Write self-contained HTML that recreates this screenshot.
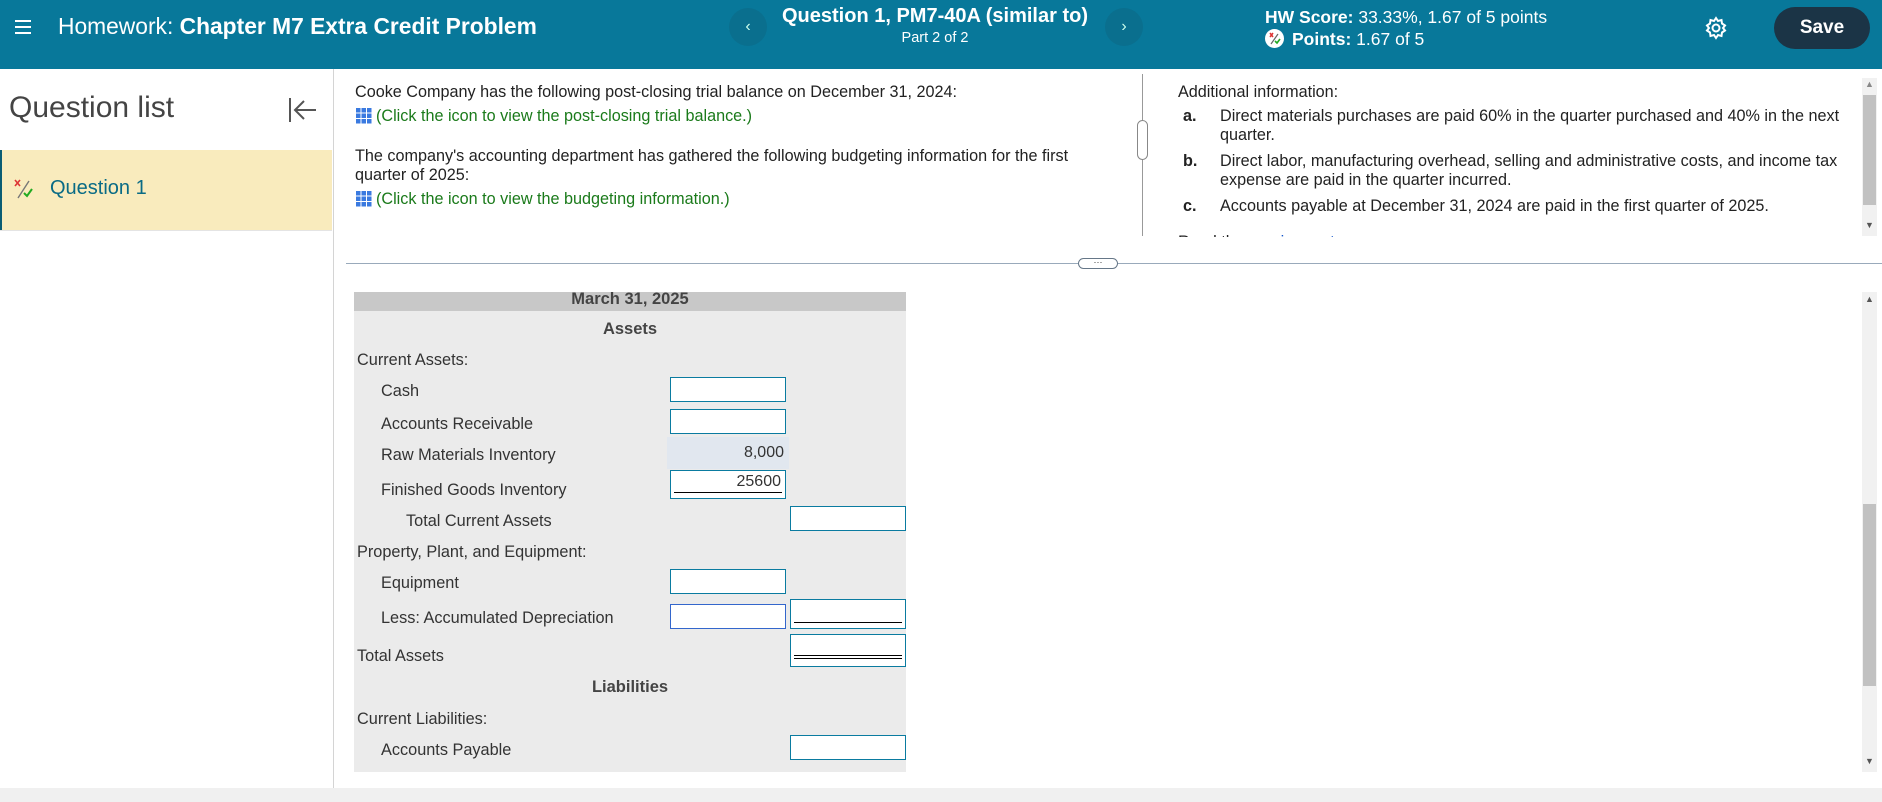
<!DOCTYPE html>
<html><head><meta charset="utf-8"><style>
*{box-sizing:border-box;margin:0;padding:0}
body{width:1882px;height:802px;overflow:hidden;background:#fff;font-family:"Liberation Sans",Arial,sans-serif;color:#333;position:relative}
.a{position:absolute;white-space:nowrap}
.hdr{position:absolute;left:0;top:0;width:1882px;height:69px;background:#08789a;color:#fff}
.circ{position:absolute;width:38px;height:38px;border-radius:50%;background:#0a6f8e;color:#cfe;font-size:16px;text-align:center;line-height:38px}
.inp{position:absolute;width:116px;height:25px;background:#fff;border:1.5px solid #0a7ba0}
.lbl{position:absolute;font-size:16.3px;color:#333;white-space:nowrap}
.p{font-size:16.2px;color:#222}
.g{color:#1a7a1a}
.ic{display:inline-block;width:17px;height:17px;background:#3a7ae0;border-radius:2px;vertical-align:-3px;margin-right:4px;background-image:linear-gradient(#fff 1px,transparent 1px),linear-gradient(90deg,#fff 1px,transparent 1px);background-size:5.5px 5.5px;background-position:0 0}
</style></head><body>
<div class="hdr">
 <svg class="a" style="left:14px;top:18px" width="18" height="18" viewBox="0 0 18 18" stroke="#fff" stroke-width="2"><path d="M1 3h16M1 9h16M1 15h16"/></svg>
 <div class="a" style="left:58px;top:13px;font-size:22.8px">Homework: <b>Chapter M7 Extra Credit Problem</b></div>
 <div class="circ" style="left:729px;top:8px">&#8249;</div>
 <div class="a" style="left:935px;top:5px;transform:translateX(-50%);font-size:20px;font-weight:bold;text-align:center">Question 1, PM7-40A (similar to)</div>
 <div class="a" style="left:935px;top:30px;transform:translateX(-50%);font-size:14.5px">Part 2 of 2</div>
 <div class="circ" style="left:1105px;top:8px">&#8250;</div>
 <div class="a" style="left:1265px;top:7px;font-size:17.5px"><b>HW Score:</b> 33.33%, 1.67 of 5 points</div>
 <div class="a" style="left:1265px;top:29px;font-size:17.5px"><svg width="19" height="19" viewBox="0 0 19 19" style="vertical-align:-3px;margin-right:8px"><circle cx="9.5" cy="9.5" r="9.5" fill="#fff"/><path d="M5 4l3 4M8 4l-3 4" stroke="#d33" stroke-width="1.5"/><path d="M13 5L6 15" stroke="#666" stroke-width="1.2"/><path d="M10 12l2 2 3-4" stroke="#2a2" stroke-width="1.6" fill="none"/></svg><b>Points:</b> 1.67 of 5</div>
 <svg class="a" style="left:1704px;top:16px" width="24" height="24" viewBox="0 0 24 24" fill="none" stroke="#fff" stroke-width="2"><circle cx="12" cy="12" r="3.5"/><path d="M12 2l2 3 3.5-1 .5 3.5 3 2-2 2.5 2 2.5-3 2-.5 3.5-3.5-1-2 3-2-3-3.5 1-.5-3.5-3-2 2-2.5-2-2.5 3-2 .5-3.5 3.5 1z"/></svg>
 <div class="a" style="left:1774px;top:7px;width:96px;height:42px;border-radius:21px;background:#1b3446;font-size:19px;font-weight:bold;text-align:center;line-height:42px">Save</div>
</div>
<!-- sidebar -->
<div class="a" style="left:333px;top:69px;width:1px;height:719px;background:#d4d4d4"></div>
<div class="a" style="left:9px;top:91px;font-size:30px;color:#444">Question list</div>
<svg class="a" style="left:288px;top:97px" width="30" height="26" viewBox="0 0 30 26" stroke="#555" stroke-width="2" fill="none"><path d="M2 1v24M28 13H8M16 4l-9 9 9 9"/></svg>
<div class="a" style="left:0;top:150px;width:332px;height:80px;background:#f9ebbd;border-left:2px solid #0b5d73"></div>
<svg class="a" style="left:13px;top:178px" width="22" height="22" viewBox="0 0 22 22"><path d="M2 2l5 6M7 2l-5 6" stroke="#d33" stroke-width="1.6"/><path d="M16 3L5 20" stroke="#777" stroke-width="1.4"/><path d="M11 15l3 3 5-7" stroke="#2a2" stroke-width="2" fill="none"/></svg>
<div class="a" style="left:50px;top:177px;font-size:20px;color:#0a6b85">Question 1</div>
<div class="a" style="left:0;top:230px;width:332px;height:1px;background:#e4e4e4"></div>
<!-- content -->
<div class="a p" style="left:355px;top:83px">Cooke Company has the following post-closing trial balance on December 31, 2024:</div>
<div class="a p g" style="left:355px;top:107px"><span class="ic"></span>(Click the icon to view the post-closing trial balance.)</div>
<div class="a p" style="left:355px;top:147px;line-height:19px">The company's accounting department has gathered the following budgeting information for the first<br>quarter of 2025:</div>
<div class="a p g" style="left:355px;top:190px"><span class="ic"></span>(Click the icon to view the budgeting information.)</div>
<div class="a" style="left:1142px;top:74px;width:1px;height:162px;background:#999"></div>
<div class="a" style="left:1137px;top:120px;width:11px;height:40px;border:1px solid #888;border-radius:6px;background:#fff"></div>
<div class="a p" style="left:1178px;top:83px">Additional information:</div>
<div class="a p" style="left:1183px;top:107px;font-weight:bold">a.</div>
<div class="a p" style="left:1220px;top:107px;line-height:19px">Direct materials purchases are paid 60% in the quarter purchased and 40% in the next<br>quarter.</div>
<div class="a p" style="left:1183px;top:152px;font-weight:bold">b.</div>
<div class="a p" style="left:1220px;top:152px;line-height:19px">Direct labor, manufacturing overhead, selling and administrative costs, and income tax<br>expense are paid in the quarter incurred.</div>
<div class="a p" style="left:1183px;top:197px;font-weight:bold">c.</div>
<div class="a p" style="left:1220px;top:197px">Accounts payable at December 31, 2024 are paid in the first quarter of 2025.</div>
<div class="a" style="left:1178px;top:233px;width:600px;height:4px;overflow:hidden"><div class="p">Read the <span style="color:#15c">requirements</span></div></div>
<div class="a" style="left:1862px;top:78px;width:15px;height:158px;background:#f1f1f1"></div>
<div class="a" style="left:1863px;top:95px;width:13px;height:110px;background:#c1c1c1"></div>
<div class="a" style="left:1865px;top:79px;font-size:9px;color:#888">&#9650;</div>
<div class="a" style="left:1865px;top:220px;font-size:9px;color:#555">&#9660;</div>
<div class="a" style="left:346px;top:263px;width:1536px;height:1px;background:#9ab"></div>
<div class="a" style="left:1078px;top:258px;width:40px;height:11px;border:1px solid #678;border-radius:6px;background:#fff;font-size:9px;line-height:7px;text-align:center">&middot;&middot;&middot;</div>
<!-- table -->
<div class="a" style="left:354px;top:292px;width:552px;height:480px;background:#ebebeb"></div>
<div class="a" style="left:354px;top:292px;width:552px;height:19px;background:#c8c8c8"></div>
<div class="a" style="left:630px;top:290px;transform:translateX(-50%);font-size:16.5px;font-weight:bold;color:#444">March 31, 2025</div>
<div class="a" style="left:630px;top:320px;transform:translateX(-50%);font-size:16.5px;font-weight:bold;color:#444">Assets</div>
<div class="lbl" style="left:357px;top:351px">Current Assets:</div>
<div class="lbl" style="left:381px;top:382px">Cash</div>
<div class="lbl" style="left:381px;top:415px">Accounts Receivable</div>
<div class="lbl" style="left:381px;top:446px">Raw Materials Inventory</div>
<div class="lbl" style="left:381px;top:481px">Finished Goods Inventory</div>
<div class="lbl" style="left:406px;top:512px">Total Current Assets</div>
<div class="lbl" style="left:357px;top:543px">Property, Plant, and Equipment:</div>
<div class="lbl" style="left:381px;top:574px">Equipment</div>
<div class="lbl" style="left:381px;top:609px">Less: Accumulated Depreciation</div>
<div class="lbl" style="left:357px;top:647px">Total Assets</div>
<div class="a" style="left:630px;top:678px;transform:translateX(-50%);font-size:16.5px;font-weight:bold;color:#444">Liabilities</div>
<div class="lbl" style="left:357px;top:710px">Current Liabilities:</div>
<div class="lbl" style="left:381px;top:741px">Accounts Payable</div>
<div class="inp" style="left:670px;top:377px"></div>
<div class="inp" style="left:670px;top:409px"></div>
<div class="a" style="left:667px;top:437px;width:122px;height:32px;background:#e1e7ef;font-size:16px;text-align:right;padding:7px 5px 0 0">8,000</div>
<div class="inp" style="left:670px;top:470px;height:29px;font-size:16px;text-align:right;padding:2px 4px 0 0">25600<div style="position:absolute;left:3px;right:3px;bottom:5px;height:1px;background:#000"></div></div>
<div class="inp" style="left:790px;top:506px"></div>
<div class="inp" style="left:670px;top:569px"></div>
<div class="inp" style="left:670px;top:604px;border-color:#3366cc"></div>
<div class="inp" style="left:790px;top:599px;height:30px"><div style="position:absolute;left:3px;right:3px;bottom:5px;height:1px;background:#000"></div></div>
<div class="inp" style="left:790px;top:634px;height:33px"><div style="position:absolute;left:3px;right:3px;bottom:7px;height:4px;border-top:1.5px solid #000;border-bottom:1.5px solid #000"></div></div>
<div class="inp" style="left:790px;top:735px"></div>
<div class="a" style="left:1862px;top:292px;width:15px;height:480px;background:#f1f1f1"></div>
<div class="a" style="left:1863px;top:504px;width:13px;height:182px;background:#c1c1c1"></div>
<div class="a" style="left:1865px;top:294px;font-size:9px;color:#555">&#9650;</div>
<div class="a" style="left:1865px;top:756px;font-size:9px;color:#555">&#9660;</div>
<div class="a" style="left:0;top:788px;width:1882px;height:14px;background:#f0f0f0"></div>
</body></html>
